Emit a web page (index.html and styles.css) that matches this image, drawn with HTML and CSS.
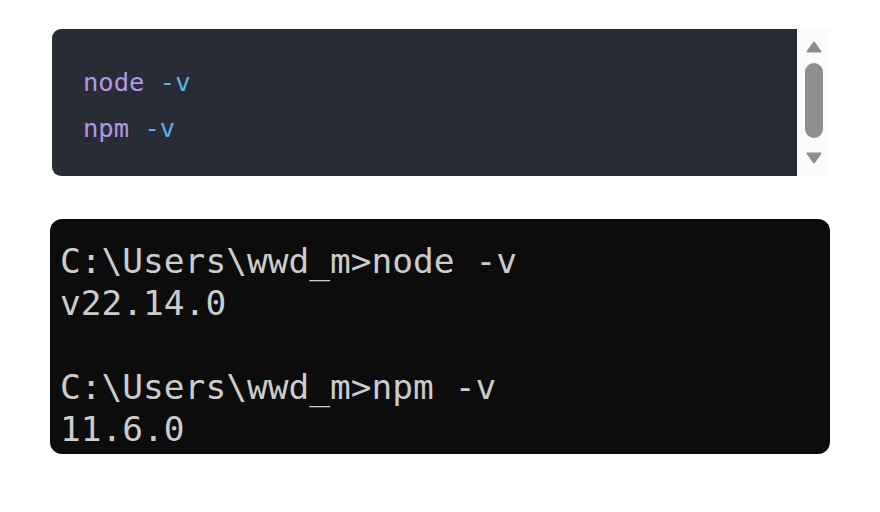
FILE: index.html
```html
<!DOCTYPE html>
<html>
<head>
<meta charset="utf-8">
<link rel="stylesheet" href="styles.css">
</head>
<body>
<div class="page">
  <div class="code-block">
    <pre class="code"><span class="cmd">node</span> <span class="flag">-v</span>
<span class="cmd">npm</span> <span class="flag">-v</span></pre>
    <div class="scrollbar">
      <svg class="arrow" width="16" height="12" viewBox="0 0 16 12"><path d="M8 1.5 L14.5 10.5 L1.5 10.5 Z" fill="#8e8e8e" stroke="#8e8e8e" stroke-width="2" stroke-linejoin="round"/></svg>
      <div class="thumb"></div>
      <svg class="arrow" width="16" height="12" viewBox="0 0 16 12"><path d="M8 10.5 L14.5 1.5 L1.5 1.5 Z" fill="#8e8e8e" stroke="#8e8e8e" stroke-width="2" stroke-linejoin="round"/></svg>
    </div>
  </div>
  <div class="terminal">
    <pre class="term-text">C:\Users\wwd_m&gt;node -v
v22.14.0

C:\Users\wwd_m&gt;npm -v
11.6.0</pre>
  </div>
</div>
</body>
</html>
```
FILE: styles.css
```css
html, body {
  margin: 0;
  padding: 0;
  background: #ffffff;
}
.page {
  display: flex;
  flex-direction: column;
  padding-top: 29px;
  gap: 43px;
}
.code-block {
  display: flex;
  margin-left: 52px;
  width: 777px;
  height: 147px;
}
.code {
  flex: 1;
  margin: 0;
  background: #272c35;
  border-radius: 9px 0 0 9px;
  padding: 30px 0 0 31px;
  font-family: "DejaVu Sans Mono", monospace;
  font-size: 25.5px;
  line-height: 46px;
  color: #b596e6;
}
.cmd { color: #b596e6; }
.flag { color: #5eaeea; }
.scrollbar {
  width: 32px;
  background: #fbfbfb;
  display: flex;
  flex-direction: column;
  align-items: center;
  padding-top: 12px;
  box-sizing: border-box;
}
.arrow {
  display: block;
  margin-left: 1px;
}
.thumb {
  width: 18px;
  height: 75px;
  border-radius: 9px;
  background: #8e8e8e;
  margin: 10px 0 14px 1px;
}
.terminal {
  margin-left: 50px;
  width: 780px;
  height: 235px;
  background: #0c0c0c;
  border-radius: 12px;
  box-sizing: border-box;
  padding: 21px 0 0 10px;
}
.term-text {
  margin: 0;
  font-family: "DejaVu Sans Mono", monospace;
  font-size: 34.5px;
  line-height: 42px;
  color: #cccccc;
}
```
